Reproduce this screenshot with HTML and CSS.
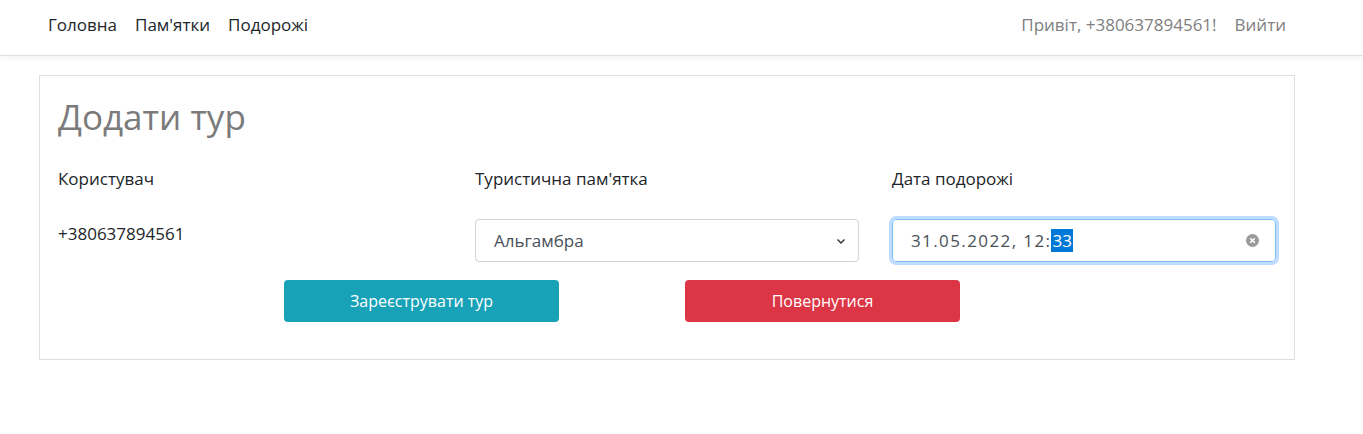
FILE: index.html
```html
<!DOCTYPE html>
<html lang="uk">
<head>
<meta charset="utf-8">
<title>Додати тур</title>
<link rel="stylesheet" href="styles.css">
</head>
<body>
<nav class="navbar">
  <div class="nav-left">
    <a class="nav-link" href="#">Головна</a>
    <a class="nav-link" href="#">Пам'ятки</a>
    <a class="nav-link" href="#">Подорожі</a>
  </div>
  <div class="nav-right">
    <span class="nav-muted">Привіт, +380637894561!</span>
    <a class="nav-muted" href="#">Вийти</a>
  </div>
</nav>
<main class="page">
  <section class="card">
    <h2 class="title">Додати тур</h2>
    <div class="fields">
      <div class="field">
        <div class="label">Користувач</div>
        <div class="static">+380637894561</div>
      </div>
      <div class="field">
        <div class="label">Туристична пам'ятка</div>
        <div class="control select">
          <span>Альгамбра</span>
          <svg class="chev" width="10" height="8" viewBox="0 0 10 8"><path d="M1.5 2.5 L5 6 L8.5 2.5" fill="none" stroke="#343a40" stroke-width="1.5"/></svg>
        </div>
      </div>
      <div class="field">
        <div class="label">Дата подорожі</div>
        <div class="control date focus">
          <span class="dt">31.05.2022, 12:<span class="sel">33</span></span>
          <svg class="clear" width="13" height="13" viewBox="0 0 13 13"><circle cx="6.5" cy="6.5" r="6.5" fill="#9a9a9a"/><path d="M4.2 4.2 L8.8 8.8 M8.8 4.2 L4.2 8.8" stroke="#fff" stroke-width="1.6"/></svg>
        </div>
      </div>
    </div>
    <div class="actions">
      <button class="btn btn-info">Зареєструвати тур</button>
      <button class="btn btn-danger">Повернутися</button>
    </div>
  </section>
</main>
</body>
</html>
```
FILE: styles.css
```css
* { box-sizing: border-box; }
body {
  margin: 0;
  font-family: "Open Sans", "Noto Sans", sans-serif;
  font-size: 17px;
  color: #212529;
  background: #fff;
}
.navbar {
  height: 56px;
  display: flex;
  align-items: center;
  justify-content: space-between;
  padding: 0 77px 6px 48px;
  border-bottom: 1px solid #e0e0e0;
  box-shadow: 0 2px 6px rgba(0,0,0,0.05);
}
.nav-left, .nav-right { display: flex; gap: 18px; }
.nav-link { color: #212529; text-decoration: none; }
.nav-muted { color: #808080; text-decoration: none; }
.page { padding: 19px 68px 0 39px; }
.card {
  border: 1px solid #dedede;
  padding: 20px 18px 37px 18px;
}
.title {
  margin: 0 0 29px 0;
  font-size: 35px;
  font-weight: 400;
  line-height: 1.2;
  color: #7b7b7b;
}
.fields {
  display: grid;
  grid-template-columns: 384px 384px 384px;
  column-gap: 33px;
}
.label { line-height: 24px; margin-bottom: 28px; }
.static { line-height: 24px; padding-top: 3px; }
.control {
  height: 43px;
  border: 1px solid #ced4da;
  border-radius: 4px;
  display: flex;
  align-items: center;
  padding: 0 12px 0 18px;
  justify-content: space-between;
  color: #495057;
}
.date.focus {
  border-color: #80bdff;
  box-shadow: 0 0 0 3px rgba(0,123,255,0.25);
}
.dt { letter-spacing: 1.4px; color: #495057; }
.sel { background: #0078d7; color: #fff; letter-spacing: 0; padding: 0 1px; }
.clear { margin-right: 4px; }
.actions {
  display: flex;
  gap: 126px;
  padding-left: 226px;
  margin-top: 18px;
}
.btn {
  width: 275px;
  height: 42px;
  border: none;
  border-radius: 4px;
  font-family: inherit;
  font-size: 16px;
  color: #fff;
}
.btn-info { background: #17a2b8; }
.btn-danger { background: #dc3545; }
```
